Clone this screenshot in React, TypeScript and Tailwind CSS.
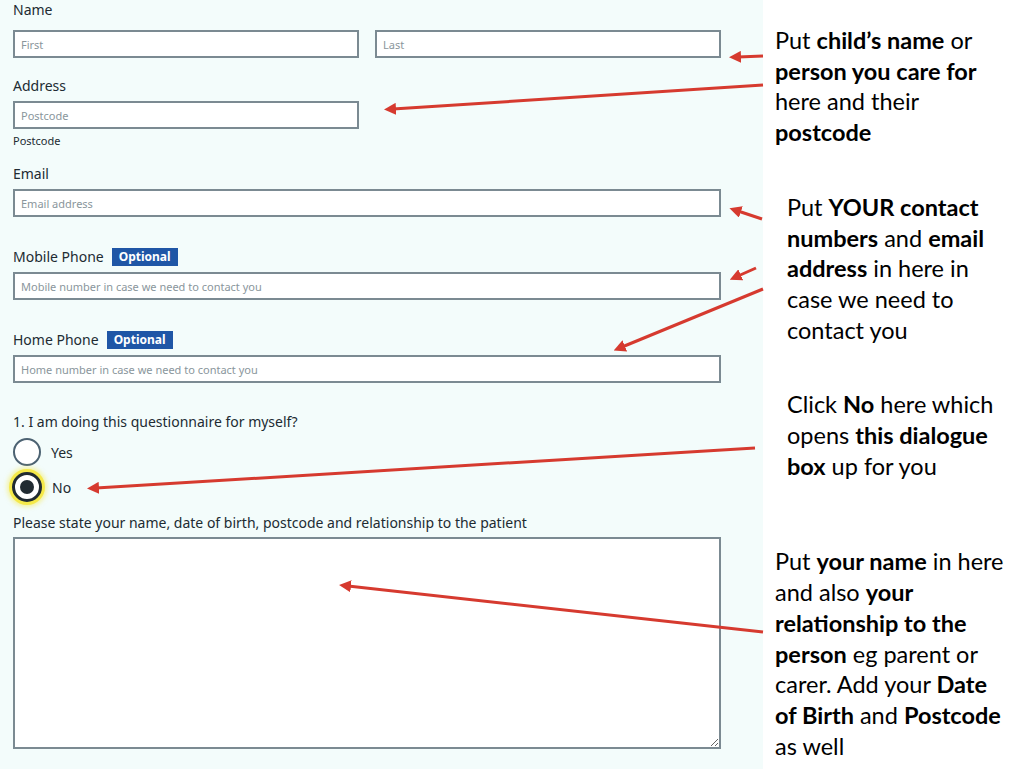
import React from 'react';

const formFont = { fontFamily: '"Noto Sans", "Open Sans", Arial, sans-serif' };
const noteFont = { fontFamily: 'Lato, "Open Sans", Arial, sans-serif' };

const inputClass =
    'block h-[28px] bg-white border-2 border-[#7b8a92] px-[6px] text-[11px] text-[#212b32] placeholder:text-[#8a969c] outline-none';

const OptionalTag = () => (
    <span className="ml-[8px] inline-flex items-center h-[18px] px-[7px] bg-[#1f56a6] text-white text-[12px] font-bold">
        Optional
    </span>
);

const Radio: React.FC<{ label: string; checked?: boolean }> = ({ label, checked }) => (
    <div className="flex items-center h-[28px]">
        {checked ? (
            <span className="flex items-center justify-center w-[30px] h-[30px] rounded-full bg-white border-[3px] border-[#212b32] shadow-[0_0_0_3px_#f5e94a,0_0_4px_5px_rgba(245,233,74,0.5)]">
                <span className="w-[14px] h-[14px] rounded-full bg-[#212b32]" />
            </span>
        ) : (
            <span className="w-[28px] h-[28px] rounded-full bg-white border-2 border-[#4c6272]" />
        )}
        <span className="ml-[10px] text-[14px] text-[#212b32]">{label}</span>
    </div>
);

const Arrows = () => (
    <svg className="absolute inset-0 pointer-events-none" width="1024" height="769" viewBox="0 0 1024 769">
        <defs>
            <marker id="head" markerWidth="4" markerHeight="4" refX="1" refY="2" orient="auto" markerUnits="strokeWidth">
                <path d="M0,0 L4,2 L0,4 z" fill="#d63a2f" />
            </marker>
        </defs>
        <g stroke="#d63a2f" strokeWidth="3" fill="none" markerEnd="url(#head)">
            <line x1="763" y1="56" x2="738" y2="57" />
            <line x1="763" y1="85" x2="393" y2="109" />
            <line x1="762" y1="219" x2="738" y2="211" />
            <line x1="756" y1="268" x2="738" y2="276" />
            <line x1="763" y1="289" x2="622" y2="347" />
            <line x1="755" y1="448" x2="96" y2="488" />
            <line x1="763" y1="632" x2="348" y2="586" />
        </g>
    </svg>
);

export default function App() {
    return (
        <div className="relative flex w-[1024px] h-[769px] overflow-hidden bg-white">
            <div className="w-[763px] h-full bg-[#f3fcfb] pl-[13px] text-[#212b32]" style={formFont}>
                <div className="h-[20px] text-[14px] leading-[20px]">Name</div>
                <div className="mt-[10px] flex gap-[16px]">
                    <input className={`${inputClass} w-[346px]`} placeholder="First" />
                    <input className={`${inputClass} w-[346px]`} placeholder="Last" />
                </div>

                <div className="mt-[18px] h-[20px] text-[14px] leading-[20px]">Address</div>
                <input className={`${inputClass} mt-[5px] w-[346px]`} placeholder="Postcode" />
                <div className="mt-[5px] text-[11px] leading-[14px]">Postcode</div>

                <div className="mt-[16px] h-[20px] text-[14px] leading-[20px]">Email</div>
                <input className={`${inputClass} mt-[5px] w-[708px]`} placeholder="Email address" />

                <div className="mt-[30px] flex items-center h-[20px] text-[14px] leading-[20px]">
                    Mobile Phone <OptionalTag />
                </div>
                <input className={`${inputClass} mt-[5px] w-[708px]`} placeholder="Mobile number in case we need to contact you" />

                <div className="mt-[30px] flex items-center h-[20px] text-[14px] leading-[20px]">
                    Home Phone <OptionalTag />
                </div>
                <input className={`${inputClass} mt-[5px] w-[708px]`} placeholder="Home number in case we need to contact you" />

                <div className="mt-[30px] text-[14px] leading-[18px]">1. I am doing this questionnaire for myself?</div>
                <div className="mt-[7px]">
                    <Radio label="Yes" />
                </div>
                <div className="mt-[7px] -ml-[1px]">
                    <Radio label="No" checked />
                </div>

                <div className="mt-[13px] text-[14px] leading-[18px]">
                    Please state your name, date of birth, postcode and relationship to the patient
                </div>
                <textarea className="mt-[5px] block w-[708px] h-[212px] bg-white border-2 border-[#7b8a92] outline-none" />
            </div>

            <div className="flex-1 h-full bg-white text-black text-[23.5px] leading-[30.7px]" style={noteFont}>
                <p className="mt-[25px] pl-[12px]">
                    Put <b>child’s name</b> or<br />
                    <b>person you care for</b><br />
                    here and their<br />
                    <b>postcode</b>
                </p>
                <p className="mt-[44px] pl-[24px]">
                    Put <b>YOUR contact</b><br />
                    <b>numbers</b> and <b>email</b><br />
                    <b>address</b> in here in<br />
                    case we need to<br />
                    contact you
                </p>
                <p className="mt-[44px] pl-[24px]">
                    Click <b>No</b> here which<br />
                    opens <b>this dialogue</b><br />
                    <b>box</b> up for you
                </p>
                <p className="mt-[65px] pl-[12px]">
                    Put <b>your name</b> in here<br />
                    and also <b>your</b><br />
                    <b>relationship to the</b><br />
                    <b>person</b> eg parent or<br />
                    carer. Add your <b>Date</b><br />
                    <b>of Birth</b> and <b>Postcode</b><br />
                    as well
                </p>
            </div>

            <Arrows />
        </div>
    );
}
